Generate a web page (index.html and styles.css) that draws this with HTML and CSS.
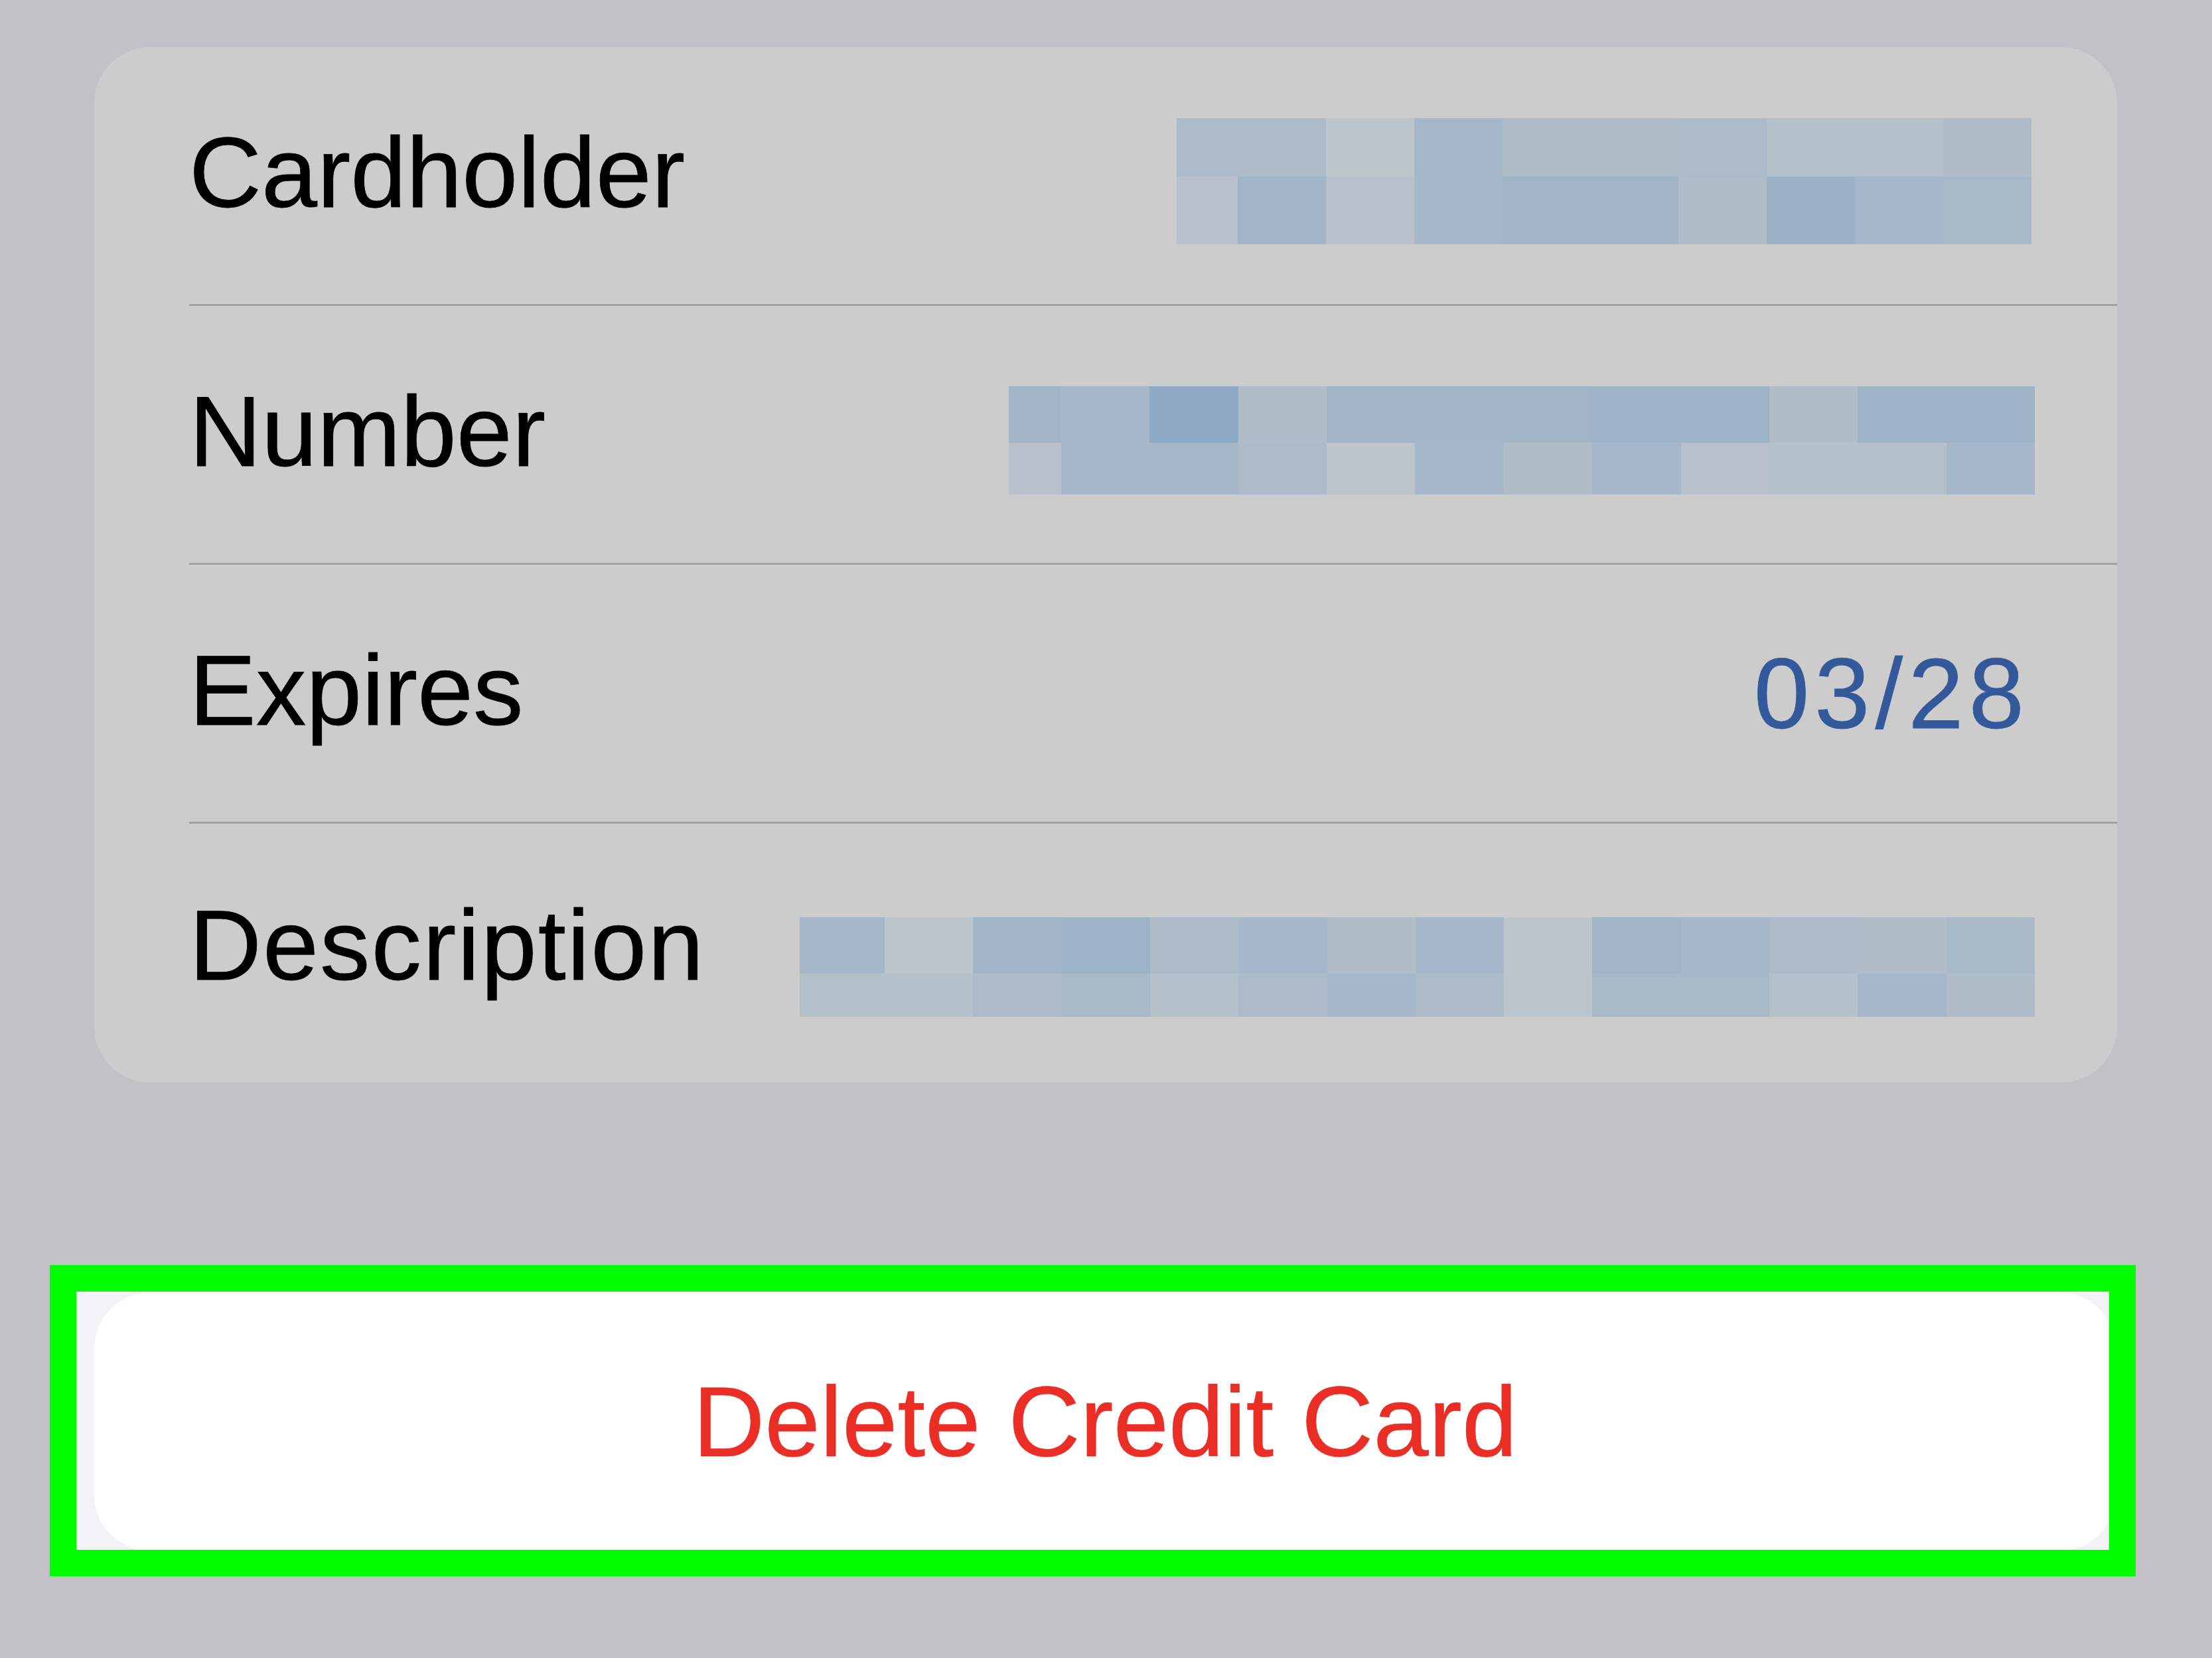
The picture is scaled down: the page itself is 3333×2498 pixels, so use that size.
FILE: index.html
```html
<!DOCTYPE html>
<html lang="en">
<head>
  <meta charset="UTF-8" />
  <meta name="viewport" content="width=device-width, initial-scale=1.0"/>
  <title>Credit Card</title>
  <link rel="stylesheet" href="styles.css">
</head>
<body>

  <div class="page">
    <div class="card">
      <div class="row">
        <span class="label">Cardholder</span>
        <div class="pixels pixels-name">
          <span class="c5"></span><span class="c5"></span><span class="c1"></span><span class="c7"></span><span class="c4"></span>
          <span class="c4"></span><span class="c5"></span><span class="c3"></span><span class="c3"></span><span class="c4"></span>
          <span class="c2"></span><span class="c8"></span><span class="c2"></span><span class="c7"></span><span class="c8"></span>
          <span class="c8"></span><span class="c4"></span><span class="c10"></span><span class="c7"></span><span class="c6"></span>
        </div>
      </div>
      <div class="row">
        <span class="label">Number</span>
        <div class="pixels pixels-number">
          <span class="c8"></span><span class="c7"></span><span class="c11"></span><span class="c4"></span><span class="c8"></span><span class="c8"></span>
          <span class="c8"></span><span class="c9"></span><span class="c9"></span><span class="c4"></span><span class="c9"></span><span class="c9"></span>
          <span class="c2"></span><span class="c7"></span><span class="c7"></span><span class="c5"></span><span class="c1"></span><span class="c7"></span>
          <span class="c4"></span><span class="c7"></span><span class="c2"></span><span class="c3"></span><span class="c3"></span><span class="c7"></span>
        </div>
      </div>
      <div class="row">
        <span class="label">Expires</span>
        <span class="value">03/28</span>
      </div>
      <div class="row">
        <span class="label label-desc">Description</span>
        <div class="pixels pixels-desc">
          <span class="c7"></span><span class="c1"></span><span class="c8"></span><span class="c9"></span><span class="c5"></span><span class="c7"></span><span class="c4"></span>
          <span class="c7"></span><span class="c1"></span><span class="c8"></span><span class="c7"></span><span class="c5"></span><span class="c4"></span><span class="c6"></span>
          <span class="c3"></span><span class="c3"></span><span class="c5"></span><span class="c6"></span><span class="c3"></span><span class="c5"></span><span class="c7"></span>
          <span class="c5"></span><span class="c1"></span><span class="c6"></span><span class="c6"></span><span class="c3"></span><span class="c7"></span><span class="c4"></span>
        </div>
      </div>
    </div>

    <div class="highlight">
      <button type="button" class="btn-delete">Delete Credit Card</button>
    </div>
  </div>

</body>
</html>
```

FILE: styles.css
```css
body {
  margin: 0;
  background: #c1c1c6;
  font-family: "Liberation Sans", Arial, sans-serif;
}

.page {
  width: 3333px;
  height: 2498px;
  padding-top: 71px;
  box-sizing: border-box;
  overflow: hidden;
}

.card {
  margin-left: 142px;
  width: 3048px;
  background: #cccccc;
  border-radius: 84px;
  overflow: hidden;
}

.row {
  display: flex;
  align-items: center;
  justify-content: space-between;
  height: 390px;
  box-sizing: border-box;
  margin-left: 143px;
  padding-right: 124px;
  border-bottom: 3px solid #a1a1a1;
}

.row:last-child {
  border-bottom: none;
}

.label {
  font-size: 151px;
  line-height: 1;
  color: #000;
  margin-bottom: 10px;
  -webkit-text-stroke: 0.8px #000;
}

.label-desc {
  margin-bottom: 26px;
  letter-spacing: 2px;
}

.value {
  font-size: 150px;
  line-height: 1;
  color: #33599b;
  letter-spacing: 8px;
  margin-right: 8px;
  -webkit-text-stroke: 0.8px #33599b;
}

/* blurred (pixelated) personal data */
.pixels {
  display: grid;
}

.pixels-name {
  width: 1288px;
  grid-template-columns: 92px repeat(9, 1fr);
  grid-template-rows: 88px 102px;
  margin-top: 16px;
  margin-right: 5px;
}

.pixels-number {
  width: 1546px;
  grid-template-columns: 79px repeat(11, 1fr);
  grid-template-rows: 85px 78px;
  margin-top: 18px;
}

.pixels-desc {
  width: 1861px;
  grid-template-columns: 128px repeat(13, 1fr);
  grid-template-rows: 85px 65px;
  margin-top: 42px;
}

.c1 { background: #bcc4cc; }
.c2 { background: #b8c1cb; }
.c3 { background: #b4c0ca; }
.c4 { background: #b0bdc8; }
.c5 { background: #adbac8; }
.c6 { background: #a9b8c7; }
.c7 { background: #a5b7c8; }
.c8 { background: #a2b5c7; }
.c9 { background: #9fb3c6; }
.c10 { background: #9db2c5; }
.c11 { background: #8ea9c3; }

.highlight {
  margin: 275px 0 0 75px;
  width: 3063px;
  height: 389px;
  border: 40px solid #00ff00;
  background: #f2f2f7;
  overflow: hidden;
}

.btn-delete {
  display: block;
  margin: 1px 0 0 27px;
  width: 3046px;
  height: 390px;
  padding: 0;
  border: none;
  border-radius: 85px;
  background: #ffffff;
  color: #ea2e26;
  font-family: inherit;
  font-size: 150px;
  -webkit-text-stroke: 0.6px #ea2e26;
  cursor: pointer;
}
```
